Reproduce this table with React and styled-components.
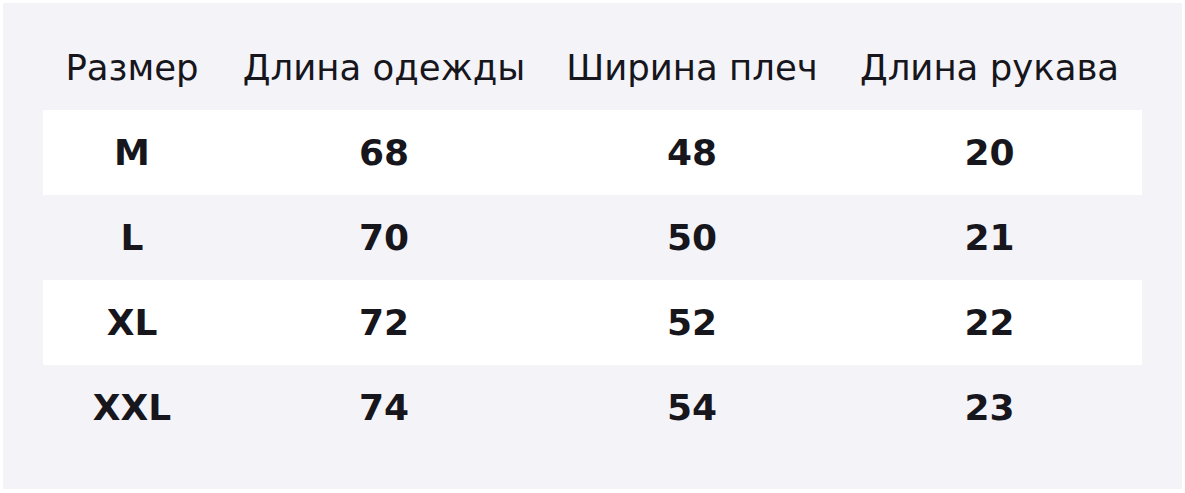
import React from 'react';
import styled, { createGlobalStyle } from 'styled-components';

const GlobalStyle = createGlobalStyle`
	html, body {
		margin: 0;
		padding: 0;
		background: #ffffff;
	}
	body {
		font-family: 'DejaVu Sans', 'Liberation Sans', sans-serif;
		color: #16161c;
	}
`;

const rows = [
	['M', '68', '48', '20'],
	['L', '70', '50', '21'],
	['XL', '72', '52', '22'],
	['XXL', '74', '54', '23'],
];

const headers = ['Размер', 'Длина одежды', 'Ширина плеч', 'Длина рукава'];
const colWidths = [178, 326, 290, 305];

const App = () => {
	return (
		<>
			<GlobalStyle />
			<Page>
				<Panel>
					<SizeTable>
						<colgroup>
							{colWidths.map((w, i) => (
								<col key={i} style={{ width: w }} />
							))}
						</colgroup>
						<thead>
							<tr>
								{headers.map((h) => (
									<HeadCell key={h}>{h}</HeadCell>
								))}
							</tr>
						</thead>
						<tbody>
							{rows.map((r, i) => (
								<Row key={r[0]} $striped={i % 2 === 0}>
									{r.map((v, j) => (
										<Cell key={j}>{v}</Cell>
									))}
								</Row>
							))}
						</tbody>
					</SizeTable>
				</Panel>
			</Page>
		</>
	);
};

const Page = styled.div`
	padding: 3px;
	width: 1185px;
	height: 493px;
	box-sizing: border-box;
`;

const Panel = styled.div`
	background-color: #f4f3f8;
	width: 1179px;
	height: 486px;
	box-sizing: border-box;
	padding: 22px 40px 0 40px;
`;

const SizeTable = styled.table`
	border-collapse: collapse;
	border-spacing: 0;
	table-layout: fixed;
	width: 1099px;
`;

const HeadCell = styled.th`
	height: 85px;
	padding: 0;
	font-size: 35.5px;
	font-weight: 400;
	white-space: nowrap;
	text-align: center;
	vertical-align: middle;
`;

const Row = styled.tr`
	background-color: ${({ $striped }) => ($striped ? '#ffffff' : 'transparent')};
`;

const Cell = styled.td`
	height: 85px;
	padding: 0;
	font-size: 36px;
	font-weight: 700;
	text-align: center;
	vertical-align: middle;
`;

export default App;
